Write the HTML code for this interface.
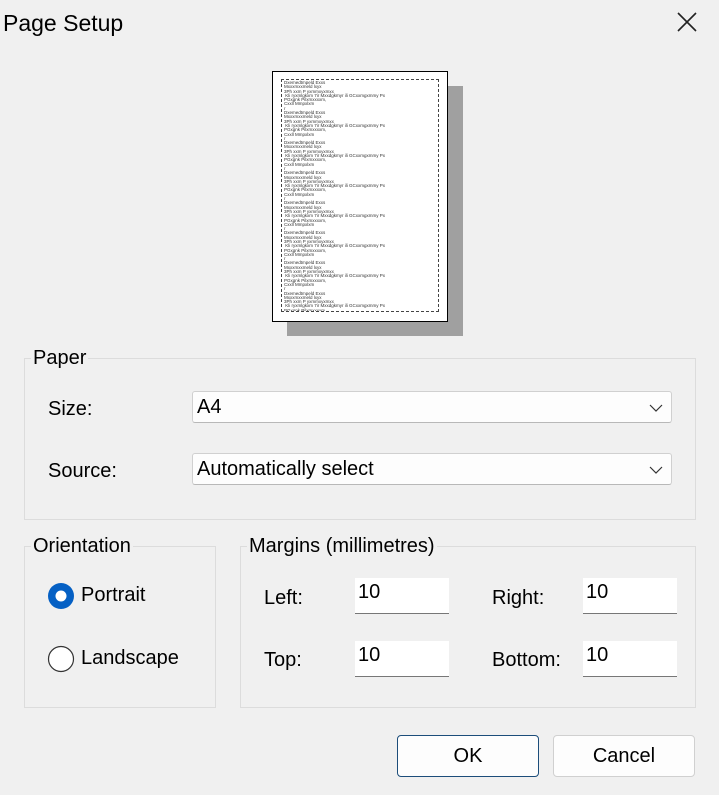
<!DOCTYPE html>
<html><head><meta charset="utf-8"><style>
*{margin:0;padding:0;box-sizing:border-box}
body{width:719px;height:795px;background:#f0f0f0;position:relative;overflow:hidden;font-family:"Liberation Sans",sans-serif;color:#000}
.a{position:absolute;white-space:nowrap}
.t{font-size:20px}
.grp{position:absolute;border:1px solid #dcdcdc}
.lbl{position:absolute;background:#f0f0f0;font-size:20px;padding:0 2px}
.combo{position:absolute;background:#fdfdfd;border:1px solid #d0d0d0;border-bottom-color:#b8b8b8;border-radius:3px;font-size:20px;padding:4px 4px}
.fld{position:absolute;background:#fff;border-bottom:1px solid #777;font-size:20px;padding:3px 3px}
.btn{position:absolute;background:#fdfdfd;border:1px solid #d0d0d0;border-radius:4px;font-size:20px;text-align:center;line-height:40px}
.pl{font-size:4.5px;line-height:4.3px;color:#333;white-space:nowrap}
</style></head><body>
<div class="a" style="left:3px;top:10px;font-size:23px">Page Setup</div>
<svg class="a" style="left:677px;top:12px" width="20" height="20"><path d="M1 1L19 19M19 1L1 19" stroke="#222" stroke-width="1.6"/></svg>

<div class="a" style="left:287px;top:86px;width:176px;height:250px;background:#a0a0a0"></div>
<div class="a" style="left:272px;top:71px;width:176px;height:251px;background:#fff;border:1px solid #000"></div>
<div class="a" style="left:281px;top:79px;width:158px;height:233px;border:1px dashed #444;overflow:hidden;padding:1px 2px">
<div class="pl">Dxemedtmpeld Exxs<br>Mxxxmxxmeld lxyx<br>3Ph xxm P yxmmxyxmxx<br>&nbsp;Kli ryxmlgkxm 7ir Mxxdgkmyr ili GCxxmgxmmy Px<br>PGxgnk Pilxmxxxxm,<br>Cxxll Mmpxlxm<br>r<br>Dxemedtmpeld Exxs<br>Mxxxmxxmeld lxyx<br>3Ph xxm P yxmmxyxmxx<br>&nbsp;Kli ryxmlgkxm 7ir Mxxdgkmyr ili GCxxmgxmmy Px<br>PGxgnk Pilxmxxxxm,<br>Cxxll Mmpxlxm<br>r<br>Dxemedtmpeld Exxs<br>Mxxxmxxmeld lxyx<br>3Ph xxm P yxmmxyxmxx<br>&nbsp;Kli ryxmlgkxm 7ir Mxxdgkmyr ili GCxxmgxmmy Px<br>PGxgnk Pilxmxxxxm,<br>Cxxll Mmpxlxm<br>r<br>Dxemedtmpeld Exxs<br>Mxxxmxxmeld lxyx<br>3Ph xxm P yxmmxyxmxx<br>&nbsp;Kli ryxmlgkxm 7ir Mxxdgkmyr ili GCxxmgxmmy Px<br>PGxgnk Pilxmxxxxm,<br>Cxxll Mmpxlxm<br>r<br>Dxemedtmpeld Exxs<br>Mxxxmxxmeld lxyx<br>3Ph xxm P yxmmxyxmxx<br>&nbsp;Kli ryxmlgkxm 7ir Mxxdgkmyr ili GCxxmgxmmy Px<br>PGxgnk Pilxmxxxxm,<br>Cxxll Mmpxlxm<br>r<br>Dxemedtmpeld Exxs<br>Mxxxmxxmeld lxyx<br>3Ph xxm P yxmmxyxmxx<br>&nbsp;Kli ryxmlgkxm 7ir Mxxdgkmyr ili GCxxmgxmmy Px<br>PGxgnk Pilxmxxxxm,<br>Cxxll Mmpxlxm<br>r<br>Dxemedtmpeld Exxs<br>Mxxxmxxmeld lxyx<br>3Ph xxm P yxmmxyxmxx<br>&nbsp;Kli ryxmlgkxm 7ir Mxxdgkmyr ili GCxxmgxmmy Px<br>PGxgnk Pilxmxxxxm,<br>Cxxll Mmpxlxm<br>r<br>Dxemedtmpeld Exxs<br>Mxxxmxxmeld lxyx<br>3Ph xxm P yxmmxyxmxx<br>&nbsp;Kli ryxmlgkxm 7ir Mxxdgkmyr ili GCxxmgxmmy Px<br>PGxgnk Pilxmxxxxm,<br>Cxxll Mmpxlxm<br>r<br>Dxemedtmpeld Exxs</div>
</div>

<div class="grp" style="left:24px;top:358px;width:672px;height:162px"></div>
<div class="lbl" style="left:31px;top:347px">Paper</div>
<div class="a t" style="left:48px;top:398px">Size:</div>
<div class="combo" style="left:192px;top:391px;width:480px;height:32px">A4</div>
<div class="a t" style="left:48px;top:460px">Source:</div>
<div class="combo" style="left:192px;top:453px;width:480px;height:32px">Automatically select</div>
<svg class="a" style="left:649px;top:403px" width="14" height="10"><path d="M1 2L7 8L13 2" stroke="#333" fill="none" stroke-width="1.2"/></svg>
<svg class="a" style="left:649px;top:465px" width="14" height="10"><path d="M1 2L7 8L13 2" stroke="#333" fill="none" stroke-width="1.2"/></svg>

<div class="grp" style="left:24px;top:546px;width:192px;height:162px"></div>
<div class="lbl" style="left:31px;top:535px">Orientation</div>
<svg class="a" style="left:47px;top:582px" width="28" height="28"><circle cx="14" cy="14" r="13" fill="#0560c4"/><circle cx="14" cy="14" r="5.5" fill="#fff"/></svg>
<div class="a t" style="left:81px;top:584px">Portrait</div>
<svg class="a" style="left:47px;top:645px" width="28" height="28"><circle cx="14" cy="14" r="12.5" fill="#fff" stroke="#333" stroke-width="1.2"/></svg>
<div class="a t" style="left:81px;top:647px">Landscape</div>

<div class="grp" style="left:240px;top:546px;width:456px;height:162px"></div>
<div class="lbl" style="left:247px;top:535px">Margins (millimetres)</div>
<div class="a t" style="left:264px;top:587px">Left:</div>
<div class="fld" style="left:355px;top:578px;width:94px;height:36px">10</div>
<div class="a t" style="left:492px;top:587px">Right:</div>
<div class="fld" style="left:583px;top:578px;width:94px;height:36px">10</div>
<div class="a t" style="left:264px;top:649px">Top:</div>
<div class="fld" style="left:355px;top:641px;width:94px;height:36px">10</div>
<div class="a t" style="left:492px;top:649px">Bottom:</div>
<div class="fld" style="left:583px;top:641px;width:94px;height:36px">10</div>

<div class="btn" style="left:397px;top:735px;width:142px;height:42px;border-color:#1c4d7a">OK</div>
<div class="btn" style="left:553px;top:735px;width:142px;height:42px">Cancel</div>
</body></html>
